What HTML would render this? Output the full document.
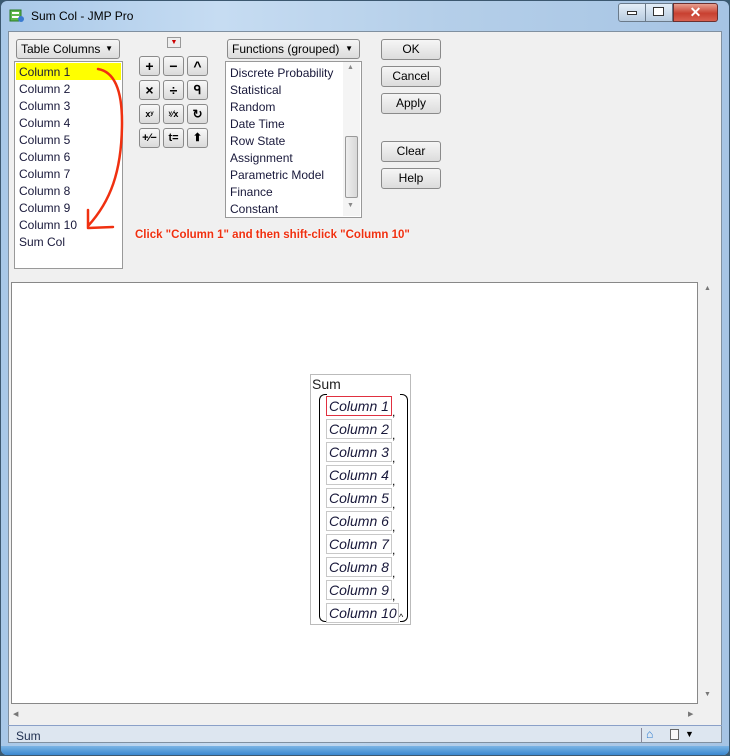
<!DOCTYPE html>
<html><head><style>
*{box-sizing:border-box;margin:0;padding:0}
body{width:730px;height:756px;overflow:hidden;background:#3a5a70;font-family:"Liberation Sans",sans-serif;font-size:12px;color:#000;position:relative}
.a{position:absolute}
.btn{position:absolute;border:1px solid #8a8a8a;border-radius:3px;background:linear-gradient(#f6f6f6,#dcdcdc);text-align:center;font-size:12px;line-height:18px}
.ob{position:absolute;width:21px;height:20px;border:1px solid #8a8a8a;border-radius:3px;background:linear-gradient(#f8f8f8,#dadada);text-align:center;font-weight:bold;font-size:14px;line-height:18px}
.li{position:absolute;left:19px;font-size:12px;color:#18183a}
.fi{position:absolute;left:230px;font-size:12px;color:#18183a}
.cb{position:absolute;left:326px;width:66px;height:20px;border:1px solid #c8c8c8;font-style:italic;font-size:14px;line-height:18px;padding-left:2px;color:#18183a}
.cm{position:absolute;left:392px;font-size:12px}
</style></head><body>
<div class="a" style="left:0;top:0;width:730px;height:756px;border-radius:7px;background:linear-gradient(90deg,#a8c8e8,#c6dcf2 30%,#b5cfe9 60%,#a6c4e4);border:1px solid #3c5870"></div>
<div class="a" style="left:1px;top:746px;width:728px;height:9px;background:linear-gradient(#7ab4e4,#3a88d0);border-radius:0 0 6px 6px"></div>
<svg class="a" style="left:9px;top:8px" width="16" height="16"><rect x="1" y="2" width="11" height="11" fill="#5fb84a" stroke="#2a7a2a"/><rect x="3" y="4" width="7" height="2" fill="#fff"/><rect x="3" y="8" width="7" height="2" fill="#fff"/><circle cx="12" cy="11" r="3" fill="#3a7ad0"/></svg>
<div class="a" style="left:31px;top:9px;font-size:12px;color:#000">Sum Col - JMP Pro</div>
<div class="a" style="left:618px;top:3px;width:55px;height:19px;border:1px solid #6a7a8a;border-radius:3px 0 0 3px;background:linear-gradient(#e4eef8,#b8cce0)"></div>
<div class="a" style="left:645px;top:3px;width:1px;height:19px;background:#6a7a8a"></div>
<div class="a" style="left:627px;top:11px;width:10px;height:4px;border:1px solid #333;background:#fff"></div>
<div class="a" style="left:653px;top:7px;width:11px;height:9px;border:1px solid #333;background:#fff"></div>
<div class="a" style="left:673px;top:3px;width:45px;height:19px;border:1px solid #6a3030;border-radius:0 3px 3px 0;background:linear-gradient(#e8a090,#c84030 55%,#d86050);color:#fff;font-weight:bold;text-align:center;line-height:17px;font-size:14px">✕</div>
<div class="a" style="left:8px;top:31px;width:714px;height:712px;background:#f0f0f0;border:1px solid #8090a0"></div>
<div class="btn" style="left:16px;top:39px;width:104px;height:20px;text-align:left;padding-left:4px">Table Columns <span style="position:absolute;right:6px;font-size:8px">▼</span></div>
<div class="a" style="left:14px;top:61px;width:109px;height:208px;background:#fff;border:1px solid #999"></div>
<div class="a" style="left:16px;top:63px;width:105px;height:17px;background:#ffff00"></div>
<div class="li" style="top:65px">Column 1</div><div class="li" style="top:82px">Column 2</div><div class="li" style="top:99px">Column 3</div><div class="li" style="top:116px">Column 4</div><div class="li" style="top:133px">Column 5</div><div class="li" style="top:150px">Column 6</div><div class="li" style="top:167px">Column 7</div><div class="li" style="top:184px">Column 8</div><div class="li" style="top:201px">Column 9</div><div class="li" style="top:218px">Column 10</div><div class="li" style="top:235px">Sum Col</div>
<svg class="a" style="left:80px;top:62px" width="50" height="180"><path d="M18 7 C30 9 42 20 42 60 C42 110 30 140 8 164 M8 148 L8 166 L33 165" fill="none" stroke="#f03010" stroke-width="2.5" stroke-linecap="round" stroke-linejoin="round"/></svg>
<div class="a" style="left:135px;top:229px;font-weight:bold;font-size:11.5px;color:#f03010;text-shadow:0 0 2px #fff">Click "Column 1" and then shift-click "Column 10"</div>
<div class="a" style="left:167px;top:37px;width:14px;height:11px;border:1px solid #999;background:#eee;color:#c00;font-size:7px;text-align:center;line-height:9px">▼</div>
<div class="ob" style="left:139px;top:56px">+</div><div class="ob" style="left:163px;top:56px">−</div><div class="ob" style="left:187px;top:56px">^</div>
<div class="ob" style="left:139px;top:80px">×</div><div class="ob" style="left:163px;top:80px">÷</div><div class="ob" style="left:187px;top:80px;font-size:12px">ᑫ</div>
<div class="ob" style="left:139px;top:104px;font-size:9px">xʸ</div><div class="ob" style="left:163px;top:104px;font-size:9px">ʸ⁄x</div><div class="ob" style="left:187px;top:104px;font-size:12px">↻</div>
<div class="ob" style="left:139px;top:128px;font-size:11px">+⁄−</div><div class="ob" style="left:163px;top:128px;font-size:11px">t=</div><div class="ob" style="left:187px;top:128px;font-size:11px">⬆</div>
<div class="btn" style="left:227px;top:39px;width:133px;height:20px;text-align:left;padding-left:4px">Functions (grouped) <span style="position:absolute;right:6px;font-size:8px">▼</span></div>
<div class="a" style="left:225px;top:61px;width:137px;height:157px;background:#fff;border:1px solid #999"></div>
<div class="a" style="left:343px;top:62px;width:17px;height:154px;background:#f4f4f4"></div>
<div class="a" style="left:345px;top:136px;width:13px;height:62px;border:1px solid #999;border-radius:2px;background:linear-gradient(90deg,#eee,#d8d8d8)"></div>
<div class="a" style="left:347px;top:64px;font-size:7px;color:#888">▲</div><div class="a" style="left:347px;top:202px;font-size:7px;color:#888">▼</div>
<div class="fi" style="top:66px">Discrete Probability</div><div class="fi" style="top:83px">Statistical</div><div class="fi" style="top:100px">Random</div><div class="fi" style="top:117px">Date Time</div><div class="fi" style="top:134px">Row State</div><div class="fi" style="top:151px">Assignment</div><div class="fi" style="top:168px">Parametric Model</div><div class="fi" style="top:185px">Finance</div><div class="fi" style="top:202px">Constant</div>
<div class="btn" style="left:381px;top:39px;width:60px;height:21px">OK</div>
<div class="btn" style="left:381px;top:66px;width:60px;height:21px">Cancel</div>
<div class="btn" style="left:381px;top:93px;width:60px;height:21px">Apply</div>
<div class="btn" style="left:381px;top:141px;width:60px;height:21px">Clear</div>
<div class="btn" style="left:381px;top:168px;width:60px;height:21px">Help</div>
<div class="a" style="left:11px;top:282px;width:687px;height:422px;background:#fff;border:1px solid #888"></div>
<div class="a" style="left:704px;top:285px;font-size:7px;color:#777">▲</div><div class="a" style="left:704px;top:691px;font-size:7px;color:#777">▼</div>
<div class="a" style="left:13px;top:710px;font-size:7px;color:#777">◀</div><div class="a" style="left:688px;top:710px;font-size:7px;color:#777">▶</div>
<div class="a" style="left:8px;top:725px;width:714px;height:1px;background:#8aa0c8"></div>
<div class="a" style="left:9px;top:726px;width:712px;height:16px;background:#dde6f0"></div>
<div class="a" style="left:16px;top:729px;font-size:12px;color:#203050">Sum</div>
<div class="a" style="left:641px;top:728px;width:1px;height:14px;background:#889"></div>
<div class="a" style="left:646px;top:727px;color:#2a7ad0;font-size:12px">⌂</div>
<div class="a" style="left:670px;top:729px;width:9px;height:11px;border:1px solid #666;background:#f8f8f8"></div>
<div class="a" style="left:685px;top:729px;font-size:9px">▼</div>
<div class="a" style="left:310px;top:374px;width:101px;height:251px;border:1px solid #bbb;background:#fff"></div>
<div class="a" style="left:312px;top:376px;font-size:14px;color:#222">Sum</div>
<div class="a" style="left:319px;top:394px;width:8px;height:228px;border:1.5px solid #000;border-right:none;border-radius:6px 0 0 6px"></div>
<div class="a" style="left:400px;top:394px;width:8px;height:228px;border:1.5px solid #000;border-left:none;border-radius:0 6px 6px 0"></div>
<div class="cb" style="top:396px;border-color:#e03040">Column 1</div><div class="cm" style="top:405px">,</div>
<div class="cb" style="top:419px">Column 2</div><div class="cm" style="top:428px">,</div>
<div class="cb" style="top:442px">Column 3</div><div class="cm" style="top:451px">,</div>
<div class="cb" style="top:465px">Column 4</div><div class="cm" style="top:474px">,</div>
<div class="cb" style="top:488px">Column 5</div><div class="cm" style="top:497px">,</div>
<div class="cb" style="top:511px">Column 6</div><div class="cm" style="top:520px">,</div>
<div class="cb" style="top:534px">Column 7</div><div class="cm" style="top:543px">,</div>
<div class="cb" style="top:557px">Column 8</div><div class="cm" style="top:566px">,</div>
<div class="cb" style="top:580px">Column 9</div><div class="cm" style="top:589px">,</div>
<div class="cb" style="top:603px;width:73px">Column 10</div><div class="a" style="left:399px;top:612px;font-size:9px">^</div>
</body></html>
